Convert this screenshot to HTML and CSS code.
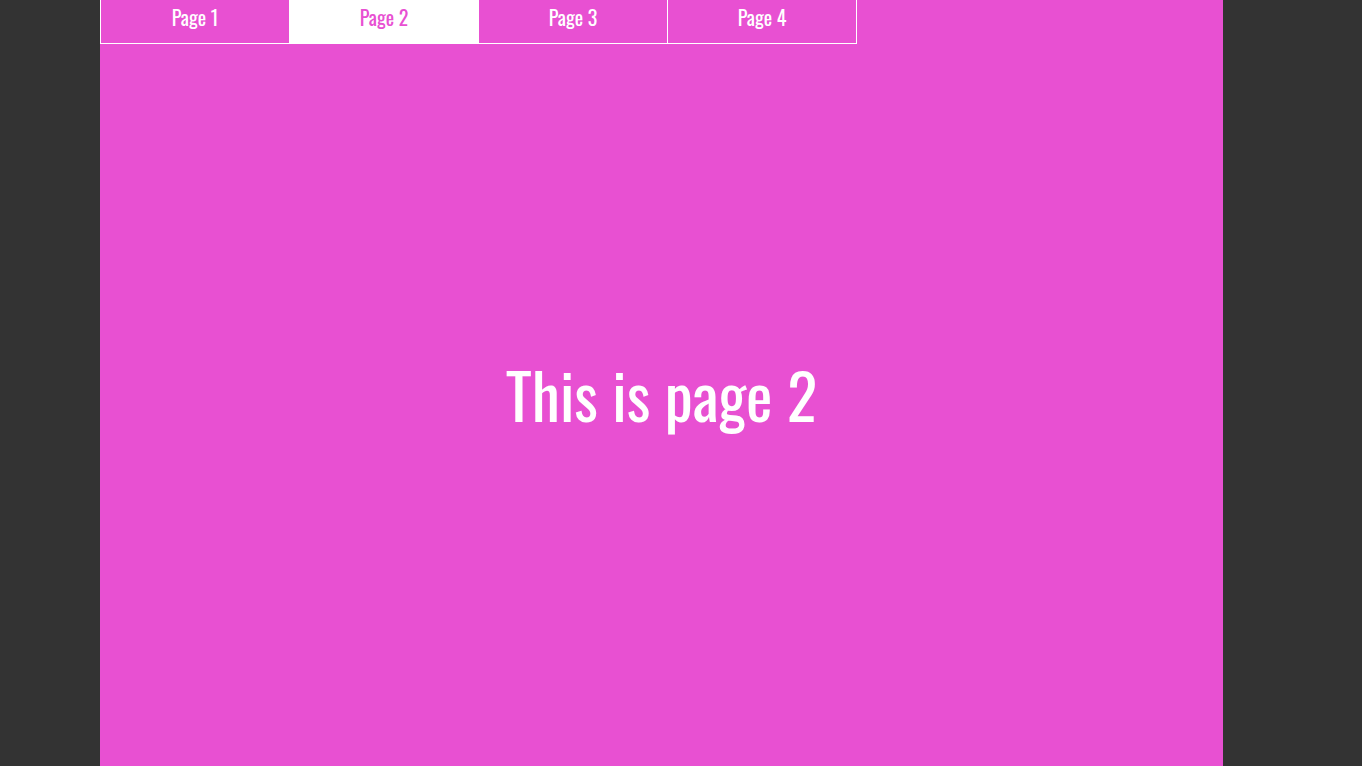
FILE: index.html
```html
<!DOCTYPE html>
<html>
<head>
<meta charset="utf-8">
<link rel="stylesheet" href="styles.css">
</head>
<body>
<div class="page">
  <nav class="tabs">
    <div class="tab">Page 1</div>
    <div class="tab active">Page 2</div>
    <div class="tab">Page 3</div>
    <div class="tab">Page 4</div>
  </nav>
  <main class="content">
    <h1 class="title">This is page 2</h1>
  </main>
</div>
</body>
</html>
```
FILE: styles.css
```css
html, body {
  margin: 0;
  height: 100%;
}
body {
  background: #333333;
  font-family: "Oswald", "Liberation Sans Narrow", "DejaVu Sans Condensed", sans-serif;
}
.page {
  margin-left: 100px;
  width: 1123px;
  height: 766px;
  background: #e850d2;
  display: flex;
  flex-direction: column;
}
.tabs {
  display: flex;
  width: 757px;
  height: 44px;
}
.tab {
  flex: 1;
  box-sizing: border-box;
  border: 1px solid #ffffff;
  border-top: none;
  border-left: none;
  padding-bottom: 10px;
  display: flex;
  align-items: center;
  justify-content: center;
  color: #ffffff;
  font-size: 20px;
}
.tab:first-child {
  border-left: 1px solid #ffffff;
}
.tab.active {
  background: #ffffff;
  color: #e850d2;
}
.content {
  flex: 1;
  display: flex;
  align-items: center;
  justify-content: center;
  padding-bottom: 24px;
}
.title {
  margin: 0;
  color: #ffffff;
  font-weight: normal;
  font-size: 63px;
}
```
